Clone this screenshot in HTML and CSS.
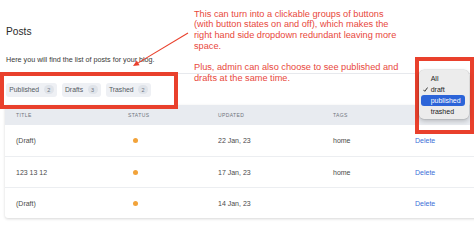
FILE: index.html
```html
<!DOCTYPE html>
<html lang="en">
<head>
<meta charset="utf-8">
<title>Posts</title>
<link rel="stylesheet" href="styles.css">
</head>
<body>
<div class="page">
  <h1 class="title">Posts</h1>
  <p class="desc">Here you will find the list of posts for your blog.</p>
  <div class="divider"></div>
  <div class="chips">
    <span class="chip">Published <span class="count">2</span></span>
    <span class="chip">Drafts <span class="count">3</span></span>
    <span class="chip">Trashed <span class="count">2</span></span>
  </div>
  <div class="table">
    <div class="row head">
      <div>Title</div><div>Status</div><div>Updated</div><div>Tags</div><div></div>
    </div>
    <div class="row">
      <div>(Draft)</div><div><span class="dot"></span></div><div>22 Jan, 23</div><div>home</div><div class="link">Delete</div>
    </div>
    <div class="row">
      <div>123 13 12</div><div><span class="dot"></span></div><div>17 Jan, 23</div><div>home</div><div class="link">Delete</div>
    </div>
    <div class="row">
      <div>(Draft)</div><div><span class="dot"></span></div><div>14 Jan, 23</div><div></div><div class="link">Delete</div>
    </div>
  </div>
</div>

<div class="note">This can turn into a clickable groups of buttons<br>(with button states on and off), which makes the<br>right hand side dropdown redundant leaving more<br>space.<br><br>Plus, admin can also choose to see published and<br>drafts at the same time.</div>

<svg class="arrow" width="70" height="45" viewBox="0 0 70 45">
  <line x1="63" y1="5" x2="13.2" y2="34.9" stroke="#e9402c" stroke-width="1.1"/>
  <polygon points="8,38 14.6,37.2 11.8,32.6" fill="#e9402c"/>
</svg>

<div class="mark mark-left"></div>
<div class="mark mark-right"></div>

<div class="menu">
  <div class="item">All</div>
  <div class="item"><svg class="check" width="5" height="5" viewBox="0 0 5 5"><path d="M0.4 2.8 L1.8 4.3 L4.6 0.5" fill="none" stroke="#222" stroke-width="0.9"/></svg>draft</div>
  <div class="item active">published</div>
  <div class="item">trashed</div>
</div>
</body>
</html>
```

FILE: styles.css
```css
html, body {
  margin: 0;
  padding: 0;
}

body {
  position: relative;
  width: 474px;
  height: 245px;
  overflow: hidden;
  background: #ffffff;
  font-family: "Liberation Sans", Arial, sans-serif;
  color: #333;
}

.page {
  padding-left: 5px;
}

.title {
  margin: 0;
  padding: 26px 0 0 1px;
  font-size: 10.2px;
  line-height: 12px;
  font-weight: 400;
  color: #2a2a2a;
}

.desc {
  margin: 0;
  padding: 17px 0 0 1px;
  font-size: 7.2px;
  line-height: 9px;
  color: #383838;
}

.divider {
  margin-top: 9px;
  height: 1px;
  background: #e7e9ed;
}

.chips {
  display: flex;
  gap: 5px;
  margin-top: 9px;
  padding-left: 1px;
}

.chip {
  display: flex;
  align-items: center;
  gap: 4.5px;
  height: 13.5px;
  padding: 0 3px 0 3.3px;
  background: #eef0f4;
  border-radius: 3px;
  font-size: 6.8px;
  color: #555b63;
}

.count {
  display: flex;
  align-items: center;
  justify-content: center;
  width: 10px;
  height: 9px;
  border-radius: 5px;
  background: #dfe3e9;
  font-size: 5.5px;
  color: #6b7280;
}

.table {
  margin-top: 8.5px;
  width: 475px;
  background: #fff;
  border-radius: 3px;
  box-shadow: 0 1px 3px rgba(0, 0, 0, 0.16);
  overflow: hidden;
}

.row {
  display: grid;
  grid-template-columns: 112px 90px 115px 82px 1fr;
  align-items: center;
  box-sizing: border-box;
  height: 31px;
  padding-left: 11px;
  border-top: 1px solid #eceef1;
  font-size: 7px;
  color: #4a4a4a;
}

.row.head {
  height: 20px;
  border-top: none;
  background: #e8ebf0;
  font-size: 5px;
  letter-spacing: 0.4px;
  text-transform: uppercase;
  color: #6f747c;
}

.row.head + .row {
  border-top: none;
}

.dot {
  display: block;
  width: 5px;
  height: 5px;
  margin-left: 5px;
  border-radius: 50%;
  background: #f2a33a;
}

.link {
  color: #3d6fd8;
}

.note {
  position: absolute;
  left: 194px;
  top: 8.6px;
  font-size: 9.2px;
  line-height: 10.7px;
  color: #e8473c;
  white-space: nowrap;
}

.arrow {
  position: absolute;
  left: 125px;
  top: 28px;
}

.mark {
  position: absolute;
  box-sizing: border-box;
  border: 4px solid #e9402c;
}

.mark-left {
  left: 0;
  top: 72px;
  width: 178px;
  height: 37px;
}

.mark-right {
  left: 415px;
  top: 57px;
  width: 59px;
  height: 77px;
}

.menu {
  position: absolute;
  left: 419px;
  top: 70px;
  width: 50px;
  height: 49px;
  box-sizing: border-box;
  padding: 2.8px 4px 0 2px;
  background: #ececec;
  border-radius: 5px;
  box-shadow: 0 2px 5px rgba(0, 0, 0, 0.22), 0 0 0 0.5px rgba(0, 0, 0, 0.12);
  font-size: 7px;
  color: #222;
}

.item {
  position: relative;
  display: flex;
  align-items: center;
  height: 11px;
  padding-left: 9.7px;
  border-radius: 3px;
}

.item.active {
  background: #2c64d8;
  color: #fff;
}

.check {
  position: absolute;
  left: 1.8px;
  top: 3px;
}
```
